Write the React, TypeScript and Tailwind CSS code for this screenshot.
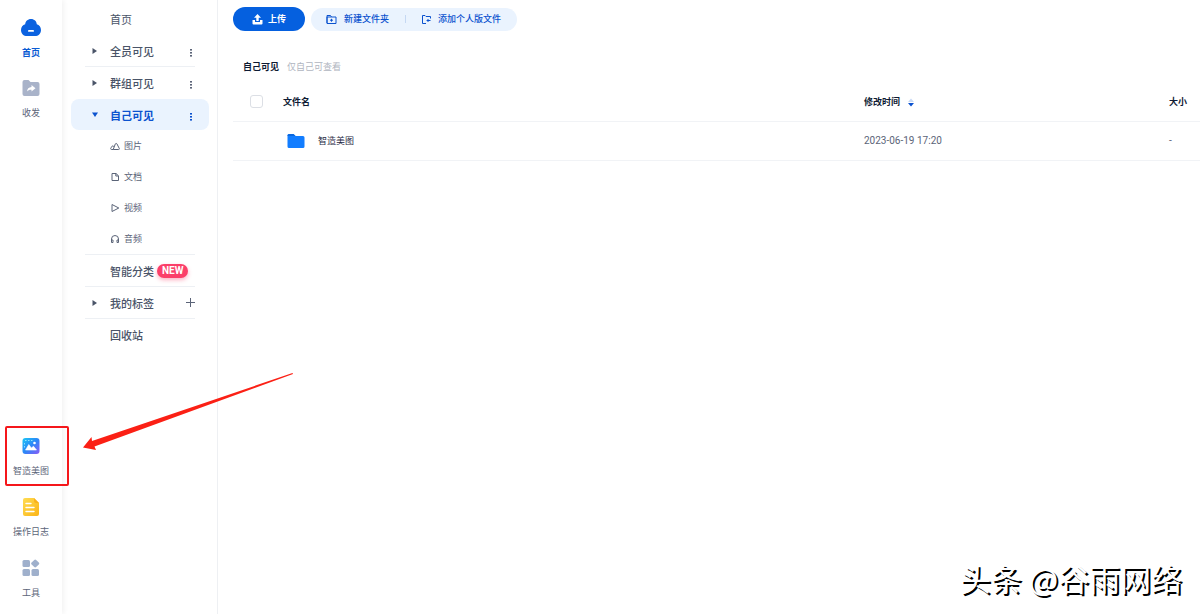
import { useState } from "react";
import type { ReactNode } from "react";

type RailItemProps = {
  label: string;
  icon: ReactNode;
  active?: boolean;
  children?: ReactNode;
};

type NavRowProps = {
  label: string;
  arrow?: boolean;
  divider?: boolean;
  strong?: boolean;
  trailing?: ReactNode;
};

const files = [{ name: "智造美图", modified: "2023-06-19 17:20", size: "-" }];

function CloudIcon() {
  return (
    <svg width="22" height="20" viewBox="0 0 22 20">
      <path
        d="M11 1C7.700 1 5.300 3.300 5.200 6.300C2.700 7 1 9.200 1 11.900C1 15.600 3.700 18 7 18H15C18.300 18 21 15.600 21 11.900C21 9.200 19.300 7 16.800 6.300C16.700 3.300 14.300 1 11 1Z"
        fill="#0b62e0"
      />
      <rect x="8" y="12" width="6" height="1.800" rx="0.900" fill="#fff" />
    </svg>
  );
}

function ShareFolderIcon() {
  return (
    <svg width="18" height="18" viewBox="0 0 18 18">
      <path d="M2.500 1H6.500L8.500 3H15.500A2 2 0 0 1 17.500 5V15A2 2 0 0 1 15.500 17H2.500A2 2 0 0 1 .5 15V3A2 2 0 0 1 2.500 1Z" fill="#a9b3c9" />
      <path d="M9.500 6L13.500 9.300L9.500 12.500V10.700C7.500 10.600 6 11.200 5 12.600C5.200 9.800 6.800 8.100 9.500 7.900Z" fill="#fff" />
    </svg>
  );
}

function PictureIcon() {
  return (
    <svg width="18" height="18" viewBox="0 0 18 18">
      <defs>
        <linearGradient id="picture-fill" x1="0" y1="0" x2="1" y2="1">
          <stop offset="0" stopColor="#1dc8f5" />
          <stop offset="0.500" stopColor="#2b86f7" />
          <stop offset="1" stopColor="#8b5cf6" />
        </linearGradient>
      </defs>
      <rect x="0.500" y="1" width="17" height="16" rx="3" fill="url(#picture-fill)" />
      <path d="M3.500 13L6.800 7.500L9.300 11L11.500 9.300L14.500 13Z" fill="#fff" stroke="#fff" strokeWidth="0.600" strokeLinejoin="round" />
      <circle cx="12.500" cy="6" r="1.300" fill="#fff" />
      <path d="M3 3.500H4.500M6 3.500H7.500M9 3.500H10.500M2.500 6V7.500M2.500 9V10.500" stroke="#9be8ff" strokeWidth="0.900" />
    </svg>
  );
}

function LogIcon() {
  return (
    <svg width="18" height="20" viewBox="0 0 18 20">
      <defs>
        <linearGradient id="log-fill" x1="0" y1="0" x2="1" y2="1">
          <stop offset="0" stopColor="#ffdc52" />
          <stop offset="1" stopColor="#fbb416" />
        </linearGradient>
      </defs>
      <path d="M3 1H12L17 6V17A2 2 0 0 1 15 19H3A2 2 0 0 1 1 17V3A2 2 0 0 1 3 1Z" fill="url(#log-fill)" />
      <path d="M12 1L17 6H14A2 2 0 0 1 12 4Z" fill="#f9b21c" />
      <path d="M4 6.500H9M4 10.500H12M4 14.500H12" stroke="#fff" strokeWidth="1.400" strokeLinecap="round" />
    </svg>
  );
}

function ToolsIcon() {
  return (
    <svg width="18" height="18" viewBox="0 0 18 18" fill="#9fb0cc">
      <rect x="0.500" y="1" width="7.500" height="7" rx="1.500" />
      <rect x="0.500" y="10" width="7.500" height="7" rx="1.500" />
      <rect x="9.500" y="10" width="7.500" height="7" rx="1.500" />
      <rect x="10" y="1.300" width="6.400" height="6.400" rx="1.300" transform="rotate(45 13.200 4.500)" />
    </svg>
  );
}

function MoreButton({ label }: { label: string }) {
  return (
    <button type="button" aria-label={label} className="flex w-2 justify-center">
      <svg width="2" height="8" viewBox="0 0 2 8" fill="currentColor" className="mt-1">
        <rect width="2" height="1.600" y="0" />
        <rect width="2" height="1.600" y="3" />
        <rect width="2" height="1.600" y="6" />
      </svg>
    </button>
  );
}

function RailItem({ label, icon, active, children }: RailItemProps) {
  return (
    <div className="relative w-full">
      <a href="#" className="flex flex-col items-center gap-[6px]">
        <span className="flex h-6 items-center">{icon}</span>
        <span
          className={
            active
              ? "text-[9px] leading-[14px] font-bold text-[#0b5bd3]"
              : "text-[9px] leading-[14px] text-[#5b6478]"
          }
        >
          {label}
        </span>
      </a>
      {children}
    </div>
  );
}

function NavRow({ label, arrow, divider, strong, trailing }: NavRowProps) {
  return (
    <div
      className={
        divider
          ? "mx-[14px] flex h-8 items-center border-b border-[#edf0f4]"
          : "mx-[14px] flex h-8 items-center border-b border-transparent"
      }
    >
      <span className="flex w-[25px] pl-[7px]">
        {arrow ? (
          <svg width="5" height="6" viewBox="0 0 5 6" fill="#4a5468">
            <path d="M.5 0L5 3L.5 6Z" />
          </svg>
        ) : null}
      </span>
      <a
        href="#"
        className={
          strong
            ? "text-[11px] leading-4 font-medium text-[#4a5468]"
            : "text-[11px] leading-4 text-[#4a5468]"
        }
      >
        {label}
      </a>
      {trailing}
    </div>
  );
}

const categories = [
  {
    label: "图片",
    icon: <path d="M3.200 8.500H1.500C.5 8.500 .5 7.500 1 6.800L2.500 4.800L3.800 5.500M3.200 8.500L5.300 3C5.700 2.200 6.600 2.200 7 3L9.300 7.500C9.500 8.200 9.200 8.500 8.600 8.500Z" />
  },
  {
    label: "文档",
    icon: <path d="M2 1.500H6L8.500 3.800V8.500H2ZM5.800 1.500V4H8.500" />
  },
  {
    label: "视频",
    icon: <path d="M2 1.500L8.800 5L2 8.500Z" />
  },
  {
    label: "音频",
    icon: <path d="M1.500 8.500V5A3.500 3.500 0 0 1 8.500 5V8.500M1.500 6H3V8.500H1.500M8.500 6H7V8.500H8.500" />
  }
];

function Rail() {
  return (
    <nav className="relative z-10 flex w-[62px] shrink-0 flex-col justify-between bg-white pt-4 pb-[14px] shadow-[2px_0_5px_rgba(0,0,0,0.05)]">
      <div className="flex flex-col gap-4">
        <RailItem label="首页" icon={<CloudIcon />} active />
        <RailItem label="收发" icon={<ShareFolderIcon />} />
      </div>
      <div className="flex flex-col gap-[17px]">
        <RailItem label="智造美图" icon={<PictureIcon />}>
          <div className="pointer-events-none absolute -inset-y-2 -right-[7px] left-[5px] rounded-[2px] border-2 border-[#f5171b]" />
          <svg
            width="212"
            height="80"
            viewBox="0 0 212 80"
            className="pointer-events-none absolute -top-[62px] left-[82px]"
          >
            <path d="M1 75.500L9.500 65L10 69L210.500 1L211 2L12.500 74.500L14 78Z" fill="#fb2015" />
          </svg>
        </RailItem>
        <RailItem label="操作日志" icon={<LogIcon />} />
        <RailItem label="工具" icon={<ToolsIcon />} />
      </div>
    </nav>
  );
}

function Sidebar() {
  return (
    <aside className="w-[156px] shrink-0 border-r border-[#eef0f3] pt-[3px] pr-2 pl-[9px] text-[#5b6478]">
      <NavRow label="首页" />
      <NavRow
        label="全员可见"
        arrow
        divider
        strong
        trailing={
          <span className="ml-auto flex">
            <MoreButton label="全员可见 更多" />
          </span>
        }
      />
      <NavRow
        label="群组可见"
        arrow
        strong
        trailing={
          <span className="ml-auto flex">
            <MoreButton label="群组可见 更多" />
          </span>
        }
      />
      <div className="flex h-[31px] items-center rounded-lg bg-[#eaf3fe] px-[14px] text-[#0b52cf]">
        <span className="flex w-[25px] pl-[7px]">
          <svg width="6" height="5" viewBox="0 0 6 5" fill="currentColor">
            <path d="M0 .5H6L3 5Z" />
          </svg>
        </span>
        <a href="#" className="text-[11px] leading-4 font-bold">
          自己可见
        </a>
        <span className="ml-auto flex">
          <MoreButton label="自己可见 更多" />
        </span>
      </div>
      <ul className="mx-[14px] border-b border-[#edf0f4]">
        {categories.map((category) => (
          <li key={category.label} className="flex h-[31px] items-center pl-[25px]">
            <a href="#" className="flex items-center gap-1 text-[9px] leading-[14px]">
              <svg width="10" height="10" viewBox="0 0 10 10" fill="none" stroke="currentColor" strokeLinejoin="round">
                {category.icon}
              </svg>
              {category.label}
            </a>
          </li>
        ))}
      </ul>
      <NavRow
        label="智能分类"
        divider
        strong
        trailing={
          <span className="ml-[3px] rounded-full bg-[#fb3f69] px-[5px] font-['Roboto'] text-[10px] leading-[14px] font-bold text-white shadow-[0_2px_4px_rgba(251,63,105,0.4)]">
            NEW
          </span>
        }
      />
      <NavRow
        label="我的标签"
        arrow
        divider
        strong
        trailing={
          <button type="button" aria-label="新建标签" className="ml-auto">
            <svg width="9" height="9" viewBox="0 0 9 9" stroke="currentColor">
              <path d="M4.500 0V9M0 4.500H9" />
            </svg>
          </button>
        }
      />
      <NavRow label="回收站" strong />
    </aside>
  );
}

function Toolbar() {
  return (
    <div className="flex items-center gap-[6px]">
      <button
        type="button"
        className="flex h-6 w-[72px] items-center justify-center gap-[5px] rounded-full bg-[#0560df] text-[9px] font-bold text-white"
      >
        <svg width="11" height="11" viewBox="0 0 11 11" fill="currentColor">
          <path d="M5.500 0L9 3.800H6.700V7H4.300V3.800H2Z" />
          <path d="M.5 6H3V8H8V6H10.500V9.500A1 1 0 0 1 9.500 10.500H1.500A1 1 0 0 1 .5 9.500Z" />
        </svg>
        上传
      </button>
      <div className="flex h-[23px] items-center rounded-full bg-[#eaf3fe] text-[9px] font-medium text-[#0b52cf]">
        <button type="button" className="flex items-center gap-[7px] pr-4 pl-[15px]">
          <svg width="11" height="11" viewBox="0 0 11 11" fill="none" stroke="currentColor">
            <path d="M1 9V1.500H4.500L5.500 3H10V9.500H1V3H5.500M5.500 4.800V7.700M4 6.200H7" />
          </svg>
          新建文件夹
        </button>
        <span className="h-2 w-px bg-[#c5d8f3]" />
        <button type="button" className="flex items-center gap-[6px] pr-4 pl-[15px]">
          <svg width="11" height="11" viewBox="0 0 11 11" fill="none" stroke="currentColor">
            <path d="M5 9.500H1.500V1.500H4L5 2.500H9.500V4.500M9.500 6.500H6M7.500 5L6 6.500L7.500 8" />
          </svg>
          添加个人版文件
        </button>
      </div>
    </div>
  );
}

function FileTable() {
  const [allChecked, setAllChecked] = useState(false);

  return (
    <table className="mt-2 w-full table-fixed text-left text-[9px] leading-[14px]">
      <thead>
        <tr className="h-[39px] border-b border-[#f1f3f6] text-[#0e1a33]">
          <th className="w-[50px] pl-[17px]">
            <input
              type="checkbox"
              aria-label="全选"
              checked={allChecked}
              onChange={(event) => setAllChecked(event.target.checked)}
              className="block size-[13px] appearance-none rounded-[3px] border border-[#dcdfe5] checked:bg-[#0560df]"
            />
          </th>
          <th className="pt-[2px] font-bold">文件名</th>
          <th className="w-[305px] pt-[2px] font-bold">
            <button type="button" className="flex items-center gap-2">
              修改时间
              <svg width="6" height="9" viewBox="0 0 6 9">
                <path d="M0 4L3 .5L6 4Z" fill="#c9daf6" />
                <path d="M0 5H6L3 8.500Z" fill="#0b52cf" />
              </svg>
            </button>
          </th>
          <th className="w-[31px] pt-[2px] font-bold">大小</th>
        </tr>
      </thead>
      <tbody>
        {files.map((file) => (
          <tr key={file.name} className="h-[39px] border-b border-[#f1f3f6]">
            <td />
            <td>
              <a href="#" className="flex items-center gap-[13px] pl-1 text-[#1f2a44]">
                <svg width="18" height="16" viewBox="0 0 18 16">
                  <path d="M2 1H6.500L8.500 3H16A1.500 1.500 0 0 1 17.500 4.500V13.500A1.500 1.500 0 0 1 16 15H2A1.500 1.500 0 0 1 .5 13.500V2.500A1.500 1.500 0 0 1 2 1Z" fill="#127dff" />
                  <path d="M6.500 1L8.500 3H.5V2.500A1.500 1.500 0 0 1 2 1Z" fill="#0b68de" />
                </svg>
                {file.name}
              </a>
            </td>
            <td className="font-['Roboto'] text-[10px] text-[#5b6478]">{file.modified}</td>
            <td className="font-['Roboto'] text-[10px] text-[#5b6478]">{file.size}</td>
          </tr>
        ))}
      </tbody>
    </table>
  );
}

export default function App() {
  return (
    <div className="relative flex min-h-screen bg-white font-['Noto_Sans_CJK_SC',sans-serif]">
      <Rail />
      <Sidebar />
      <main className="min-w-0 flex-1 pt-[7px] pl-[15px]">
        <Toolbar />
        <div className="mt-[29px] flex items-center gap-2 pl-[10px] text-[9px] leading-[14px]">
          <h1 className="font-bold text-[#0e1a33]">自己可见</h1>
          <span className="text-[#b0b5c0]">仅自己可查看</span>
        </div>
        <FileTable />
      </main>
      <p className="pointer-events-none absolute right-[18px] bottom-4 text-[31px] leading-[40px] text-white [text-shadow:2px_2px_0_#000]">
        头条 @谷雨网络
      </p>
    </div>
  );
}
